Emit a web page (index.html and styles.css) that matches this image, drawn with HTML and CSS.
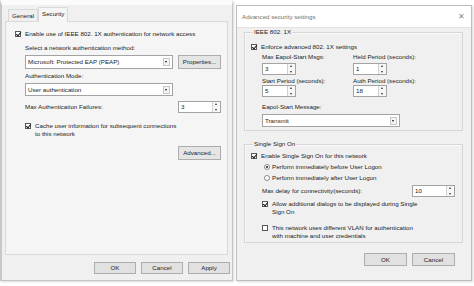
FILE: index.html
```html
<!DOCTYPE html>
<html lang="en">
<head>
  <meta charset="UTF-8" />
  <title>Network security properties</title>
  <link rel="stylesheet" href="styles.css">
</head>
<body>
  <div class="desk">

    <!-- Network properties dialog, Security tab -->
    <section class="dlg dlg-props">
      <div class="tabs">
        <span class="tab">General</span>
        <span class="tab tab-on">Security</span>
      </div>

      <div class="panel">
        <div class="check-row">
          <span class="cb on"></span>
          <span>Enable use of IEEE 802. 1X authentication for network access</span>
        </div>

        <div class="indent">
          <div class="lbl lbl-method">Select a network authentication method:</div>
          <div class="field-row">
            <div class="select select-wide"><span>Microsoft: Protected EAP (PEAP)</span><span class="drop"></span></div>
            <button class="btn btn-side">Properties...</button>
          </div>

          <div class="lbl lbl-mode">Authentication Mode:</div>
          <div class="select select-wide select-mode"><span>User authentication</span><span class="drop"></span></div>

          <div class="field-row row-failures">
            <span class="grow">Max Authentication Failures:</span>
            <div class="spin spin-side"><span>3</span><span class="arrows"></span></div>
          </div>

          <div class="check-row multi row-cache">
            <span class="cb on"></span>
            <span>Cache user information for subsequent connections<br>to this network</span>
          </div>

          <div class="right-row">
            <button class="btn btn-side">Advanced...</button>
          </div>
        </div>
      </div>

      <div class="actions actions-props">
        <button class="btn">OK</button>
        <button class="btn">Cancel</button>
        <button class="btn">Apply</button>
      </div>
    </section>

    <!-- Advanced security settings dialog -->
    <section class="dlg dlg-adv">
      <header class="titlebar">
        <span>Advanced security settings</span>
        <span class="close">&#x2715;</span>
      </header>

      <div class="adv-body">
        <fieldset class="grp grp-8021x">
          <legend>IEEE 802. 1X</legend>
          <div class="check-row row-enforce">
            <span class="cb on"></span>
            <span>Enforce advanced 802. 1X settings</span>
          </div>

          <div class="periods">
            <div class="period">
              <div class="lbl">Max Eapol-Start Msgs:</div>
              <div class="spin spin-small"><span>3</span><span class="arrows"></span></div>
            </div>
            <div class="period">
              <div class="lbl">Held Period (seconds):</div>
              <div class="spin spin-small"><span>1</span><span class="arrows"></span></div>
            </div>
            <div class="period">
              <div class="lbl">Start Period (seconds):</div>
              <div class="spin spin-small"><span>5</span><span class="arrows"></span></div>
            </div>
            <div class="period">
              <div class="lbl">Auth Period (seconds):</div>
              <div class="spin spin-small"><span>18</span><span class="arrows"></span></div>
            </div>
          </div>

          <div class="eapol">
            <div class="lbl lbl-eapol">Eapol-Start Message:</div>
            <div class="select select-eapol"><span>Transmit</span><span class="drop"></span></div>
          </div>
        </fieldset>

        <fieldset class="grp grp-sso">
          <legend>Single Sign On</legend>
          <div class="check-row row-sso">
            <span class="cb on"></span>
            <span>Enable Single Sign On for this network</span>
          </div>
          <div class="radio-row row-before">
            <span class="rb on"></span>
            <span>Perform immediately before User Logon</span>
          </div>
          <div class="radio-row row-after">
            <span class="rb"></span>
            <span>Perform immediately after User Logon</span>
          </div>
          <div class="field-row row-delay">
            <span class="grow">Max delay for connectivity(seconds):</span>
            <div class="spin spin-side"><span>10</span><span class="arrows"></span></div>
          </div>
          <div class="check-row multi row-dialogs">
            <span class="cb on"></span>
            <span>Allow additional dialogs to be displayed during Single<br>Sign On</span>
          </div>
          <div class="check-row multi row-vlan">
            <span class="cb"></span>
            <span>This network uses different VLAN for authentication<br>with machine and user credentials</span>
          </div>
        </fieldset>

        <div class="actions actions-adv">
          <button class="btn btn-adv">OK</button>
          <button class="btn btn-adv">Cancel</button>
        </div>
      </div>
    </section>

  </div>
</body>
</html>
```

FILE: styles.css
```css
* {
  box-sizing: border-box;
}

body {
  margin: 0;
  background: #ffffff;
  font-family: 'Liberation Sans', Arial, sans-serif;
  font-size: 6.2px;
  line-height: 8px;
  color: #222222;
}

.desk {
  display: flex;
  align-items: flex-start;
  gap: 3px;
  width: 474px;
  height: 286px;
  overflow: hidden;
}

/* dialogs */
.dlg {
  background: #f0f0f0;
  border: 1px solid #c4c4c4;
  box-shadow: 1px 1px 2px rgba(0, 0, 0, 0.15);
}

.dlg-props {
  width: 233px;
  height: 281px;
  padding-top: 2px;
  border-top: 5px solid #fbfbfb;
  border-left: 2px solid #c8c8c8;
}

.dlg-adv {
  width: 236px;
  height: 276px;
  margin-top: 5px;
  border-color: #bdbdbd;
}

/* tabs */
.tabs {
  display: flex;
  align-items: flex-end;
  padding-left: 6px;
  height: 14px;
  position: relative;
  z-index: 1;
}

.tab {
  height: 12px;
  padding: 0 3px;
  border: 1px solid #d9d9d9;
  border-bottom: none;
  background: #f0f0f0;
  line-height: 11px;
}

.tab-on {
  height: 15px;
  margin-bottom: -1px;
  background: #f5f5f5;
  line-height: 12px;
}

.panel {
  margin: 0 4px 0 3px;
  height: 234px;
  background: #f5f5f5;
  border: 1px solid #d9d9d9;
  padding: 8px 6px 0 9px;
}

.indent {
  padding-left: 10px;
}

.lbl-method {
  margin-top: 6px;
}

.lbl-mode {
  margin-top: 3px;
}

.field-row {
  display: flex;
  align-items: center;
  gap: 5px;
  margin-top: 3px;
}

.grow {
  flex: 1;
}

.select-mode {
  margin-top: 3px;
}

.row-failures {
  margin-top: 5px;
}

.row-cache {
  margin-top: 9px;
}

.right-row {
  display: flex;
  justify-content: flex-end;
  margin-top: 9px;
}

/* checkboxes and radios */
.check-row,
.radio-row {
  display: flex;
  align-items: center;
  gap: 4px;
}

.check-row.multi {
  align-items: flex-start;
  line-height: 7.5px;
}

.check-row.multi .cb {
  margin-top: 1px;
}

.cb {
  position: relative;
  flex: none;
  width: 6px;
  height: 6px;
  background: #ffffff;
  border: 1px solid #5a5a5a;
}

.cb.on::after {
  content: "";
  position: absolute;
  left: 1px;
  top: -1px;
  width: 2px;
  height: 4px;
  border: solid #1a1a1a;
  border-width: 0 1px 1px 0;
  transform: rotate(40deg);
}

.rb {
  position: relative;
  flex: none;
  width: 6px;
  height: 6px;
  border-radius: 50%;
  background: #ffffff;
  border: 1px solid #8a8a8a;
}

.rb.on::after {
  content: "";
  position: absolute;
  left: 1px;
  top: 1px;
  width: 2px;
  height: 2px;
  border-radius: 50%;
  background: #222;
}

/* inputs */
.select,
.spin {
  display: flex;
  align-items: center;
  background: #ffffff;
  border: 1px solid #a3a3a3;
  padding-left: 2px;
}

.select span:first-child,
.spin span:first-child {
  flex: 1;
}

.select-wide {
  width: 148px;
  height: 14px;
}

.select-mode {
  height: 13px;
}

.select-eapol {
  width: 138px;
  height: 13px;
}

.drop {
  position: relative;
  flex: none;
  width: 7px;
  height: 8px;
  margin-right: 2px;
  border: 1px solid #c8c8c8;
  background: #f4f4f4;
}

.drop::after {
  content: "";
  position: absolute;
  left: 1px;
  top: 2px;
  border-style: solid;
  border-width: 2px 1.5px 0 1.5px;
  border-color: #111 transparent transparent transparent;
}

.spin {
  height: 12px;
}

.spin-side {
  width: 43px;
  flex: none;
}

.spin-small {
  width: 34px;
  height: 12px;
}

.arrows {
  position: relative;
  flex: none;
  width: 8px;
  height: 10px;
  border-left: 1px solid #d0d0d0;
  background: #f7f7f7;
}

.arrows::before,
.arrows::after {
  content: "";
  position: absolute;
  left: 2px;
  border-style: solid;
  border-color: transparent;
}

.arrows::before {
  top: 1px;
  border-width: 0 1.5px 2px 1.5px;
  border-bottom-color: #333;
}

.arrows::after {
  bottom: 1px;
  border-width: 2px 1.5px 0 1.5px;
  border-top-color: #333;
}

/* buttons */
.btn {
  font: inherit;
  color: #222;
  width: 42px;
  height: 12px;
  padding: 0;
  background: #e1e1e1;
  border: 1px solid #adadad;
  line-height: 10px;
}

.btn-side {
  width: 43px;
  height: 14px;
  flex: none;
  background: #e5e5e5;
}

.actions {
  display: flex;
  justify-content: flex-end;
  gap: 5px;
}

.actions-props {
  margin-top: 7px;
  padding-right: 2px;
}

/* advanced dialog */
.titlebar {
  display: flex;
  justify-content: space-between;
  align-items: center;
  height: 22px;
  background: #ffffff;
  padding: 0 6px 0 5px;
  color: #707070;
  border-bottom: 1px solid #e2e2e2;
}

.close {
  font-size: 8px;
  color: #8a8a8a;
}

.adv-body {
  padding: 0 8px 0 7px;
}

.grp {
  margin: 0;
  padding: 0 7px 3px 6px;
  border: 1px solid #d6d6d6;
  box-shadow: inset 1px 1px 0 #fafafa;
}

.grp legend {
  padding: 0 1px;
  margin-left: 2px;
  line-height: 8px;
}

.row-enforce {
  margin-top: 7px;
}

.periods {
  display: grid;
  grid-template-columns: 91px 1fr;
  padding-left: 11px;
  margin-top: 2px;
  row-gap: 0;
}

.period .lbl {
  margin-bottom: 2px;
}

.period:nth-child(n + 3) .lbl {
  margin-top: 2px;
  margin-bottom: 0;
}

.eapol {
  padding-left: 11px;
  margin-top: 6px;
}

.lbl-eapol {
  margin-bottom: 3px;
}

.grp-sso {
  margin-top: 9px;
}

.row-sso {
  margin-top: 4px;
}

.radio-row {
  padding-left: 13px;
  gap: 2px;
  margin-top: 3px;
}

.row-delay {
  padding-left: 11px;
  margin-top: 3px;
}

.row-dialogs,
.row-vlan {
  padding-left: 11px;
  margin-top: 3px;
}

.row-vlan {
  margin-top: 9px;
}

.actions-adv {
  margin-top: 10px;
  padding-right: 8px;
}

.btn-adv {
  width: 43px;
  height: 13px;
}
```
